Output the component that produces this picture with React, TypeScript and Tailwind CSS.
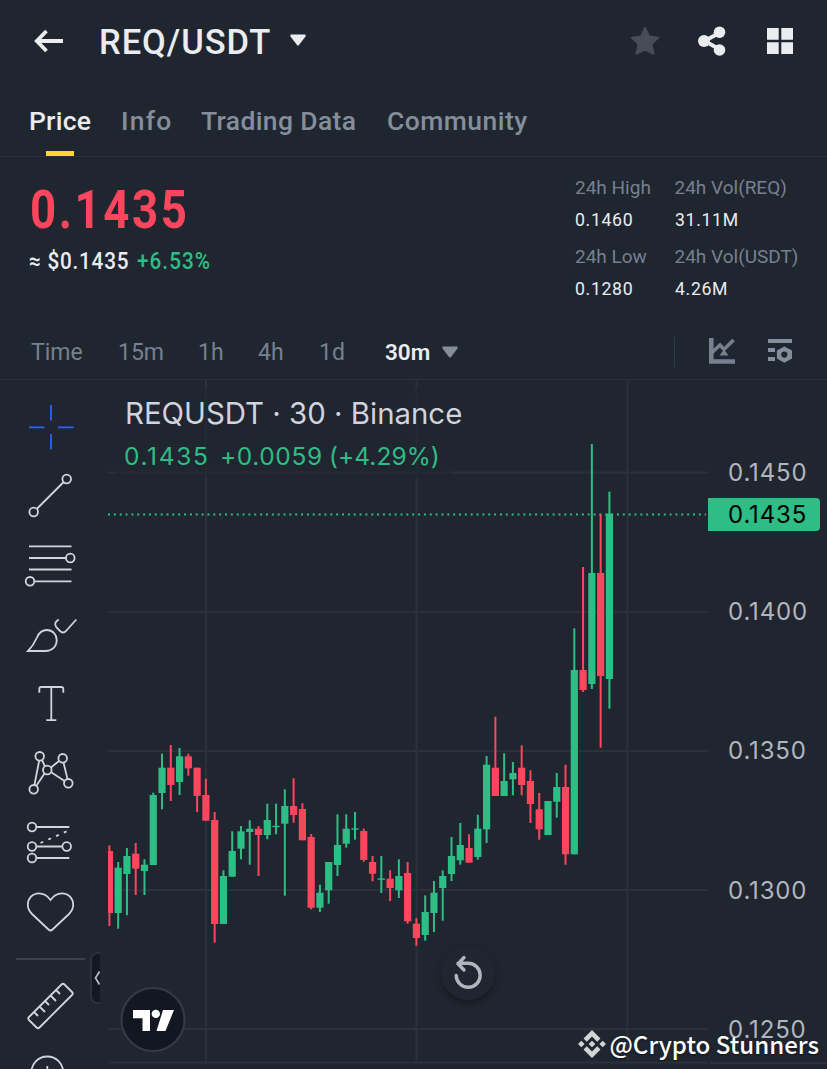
import type { ReactNode } from "react";

const UP = "#2ebd85";
const DOWN = "#fb465d";

// [direction, high, body top, body bottom, low], oldest first, in chart pixels
type Candle = ["u" | "d", number, number, number, number];

const CANDLES: Candle[] = [
  ["d", 845.3, 851, 913, 926],
  ["u", 862, 867.7, 913, 928.7],
  ["u", 848, 856, 874, 915.3],
  ["d", 843, 853.7, 868.7, 895],
  ["u", 859.3, 864.7, 871, 895],
  ["u", 792.7, 795, 865, 865],
  ["u", 753.7, 767.7, 793, 809.3],
  ["d", 745, 767.7, 785, 801],
  ["u", 748, 756.3, 782, 795],
  ["d", 753.7, 756.3, 768.3, 775.7],
  ["d", 767.7, 767.7, 796, 812],
  ["d", 778.7, 795, 820.7, 820.7],
  ["d", 812, 820, 924, 942.7],
  ["u", 870.3, 876, 924, 924],
  ["u", 831.3, 851, 876.7, 876.7],
  ["u", 826, 831.3, 848.7, 859.3],
  ["u", 820.3, 828.7, 832, 864.7],
  ["d", 826, 828.7, 835, 876],
  ["u", 803.7, 820, 835, 839.3],
  ["u", 803.7, 825.8, 827.2, 834.3],
  ["u", 789.3, 806, 823.7, 895.7],
  ["d", 778.3, 806, 815, 822.7],
  ["d", 803.3, 809, 840.3, 840.3],
  ["d", 834, 837, 907.7, 909.3],
  ["u", 884.7, 892.7, 907.7, 912],
  ["u", 862, 862, 890.3, 903.7],
  ["u", 814.3, 845, 865, 876],
  ["u", 814.3, 828.7, 843.7, 847.7],
  ["u", 812, 828.3, 829.7, 839.7],
  ["d", 828.7, 831, 860, 861.7],
  ["d", 856, 862, 873.7, 881.3],
  ["u", 856, 878.4, 879.8, 893],
  ["d", 870.3, 878.7, 888, 901],
  ["u", 859.3, 876, 890.3, 898],
  ["d", 862, 873, 921.3, 923.7],
  ["d", 918, 923.7, 938, 945.7],
  ["u", 895.3, 912, 935, 940.7],
  ["u", 881, 892.7, 913, 932],
  ["u", 870.3, 876, 888, 920.7],
  ["u", 837, 856, 874, 881],
  ["u", 823, 845, 860.3, 864.7],
  ["d", 834.3, 848, 862.7, 862.7],
  ["u", 814.7, 828.7, 857, 859.7],
  ["u", 756, 764.7, 829.3, 843],
  ["d", 716.7, 767.7, 796, 796],
  ["u", 753.3, 781, 796, 796],
  ["u", 762, 773, 779.3, 795.3],
  ["d", 745.3, 767.7, 785, 795.3],
  ["d", 770.3, 781, 804, 823],
  ["d", 793, 809.3, 829.3, 839.7],
  ["u", 801, 801, 835, 835],
  ["u", 773, 787, 801.7, 817.7],
  ["d", 764.7, 787, 854.3, 864.7],
  ["u", 628.3, 670, 854.3, 854.3],
  ["d", 567, 670, 690, 692],
  ["u", 444, 573, 684, 689],
  ["d", 514.3, 573, 676, 747.7],
  ["u", 491.7, 513.7, 679, 708.7],
];

const STEP = 8.772;
const GRID_Y = [472.5, 611.7, 751, 890, 1029];
const GRID_X = [206, 416.5, 627.5];
const PRICES = ["0.1450", "0.1400", "0.1350", "0.1300", "0.1250"];

function Caret({ className }: { className: string }) {
  return (
    <svg width="16" height="12" viewBox="0 0 16 12" className={className} fill="currentColor">
      <path d="M.5.5h15v2L9 11Q8 12 7 11L.5 2.5z" />
    </svg>
  );
}

function Header() {
  return (
    <header className="flex h-[82px] items-center pl-[34px] pr-[34px] text-[#eaecef]">
      <svg width="30" height="24" viewBox="0 0 30 24" fill="none" stroke="currentColor" strokeWidth="3.8">
        <path d="M12.500 2 2.800 12l9.700 10M3 12h26" />
      </svg>
      <h1 className="mt-[2px] ml-[35px] w-[172px] whitespace-nowrap text-[34.500px] leading-none font-medium tracking-[0.950px]">
        REQ/USDT
      </h1>
      <Caret className="ml-[19px] -mt-[2px]" />
      <div className="ml-auto flex items-center">
        <svg width="30" height="30" viewBox="0 0 30 30" fill="#474d57" stroke="#474d57" strokeWidth="2" strokeLinejoin="round">
          <path d="m15 2 3.900 8.500 9.100 1.200-6.600 6.400 2.100 9.400L15 23.600l-8.500 3.900 2.100-9.400L2 11.700l9.100-1.200z" />
        </svg>
        <svg width="30" height="30" viewBox="0 0 30 30" fill="currentColor" className="ml-[37px]">
          <path d="M23 6.500 7.500 15 23 23.500" fill="none" stroke="currentColor" strokeWidth="3.800" />
          <circle cx="7" cy="15" r="6" />
          <circle cx="22.500" cy="6.200" r="5.800" />
          <circle cx="22.500" cy="24" r="5.800" />
        </svg>
        <svg width="26" height="26" viewBox="0 0 26 26" fill="currentColor" className="ml-[40px]">
          <path d="M0 0h11.700v11.700H0zM14.300 0H26v11.700H14.300zM0 14.300h11.700V26H0zM14.300 14.300H26V26H14.300z" />
        </svg>
      </div>
    </header>
  );
}

function Tabs() {
  return (
    <nav className="flex h-[75px] border-b border-[#2b3139] pl-[29px] text-[26.500px] font-medium text-[#848e9c]">
      <div className="flex w-[92px] flex-col">
        <span className="pt-[19px] tracking-[0.200px] text-[#eaecef]">Price</span>
        <span className="mt-auto ml-[17px] h-[5px] w-[28px] bg-[#fcd535]" />
      </div>
      <span className="w-[80px] pt-[19px] tracking-[1.200px]">Info</span>
      <span className="w-[186px] pt-[19px] tracking-[0.350px] whitespace-nowrap">Trading Data</span>
      <span className="pt-[19px] tracking-[0.450px]">Community</span>
    </nav>
  );
}

function Stat({ label, value }: { label: string; value: string }) {
  return (
    <div className="h-[69px] whitespace-nowrap">
      <div className="text-[19px] leading-[31px] text-[#76808f]">{label}</div>
      <div className="origin-left scale-x-[0.930] pt-[2px] text-[19px] leading-[30px] tracking-[0.700px] text-[#eaecef]">{value}</div>
    </div>
  );
}

function Summary() {
  return (
    <section className="flex h-[168px] pl-[30px]">
      <div className="w-[545px] whitespace-nowrap">
        <div className="mt-[26px] origin-left scale-x-[0.860] text-[53px] leading-[54px] font-bold tracking-[3px] text-[#fb465d]">
          0.1435
        </div>
        <div className="mt-[10px] -ml-px origin-left scale-x-[0.900] text-[23px] leading-[30px] font-medium tracking-[0.850px] text-[#eaecef]">
          ≈ $0.1435 <span className="ml-[2px] tracking-[1.200px] text-[#2ebd85]">+6.53%</span>
        </div>
      </div>
      <div className="grid grid-cols-[99.500px_auto] content-start pt-[15px]">
        <Stat label="24h High" value="0.1460" />
        <Stat label="24h Vol(REQ)" value="31.11M" />
        <Stat label="24h Low" value="0.1280" />
        <Stat label="24h Vol(USDT)" value="4.26M" />
      </div>
    </section>
  );
}

function Intervals() {
  return (
    <div className="flex h-[55px] items-center border-b border-[#2b3139] pl-[31px] text-[23px] text-[#76808f]">
      <span className="mt-[3px] w-[87px]">Time</span>
      <span className="mt-[3px] w-[80px]">15m</span>
      <span className="mt-[3px] w-[60px]">1h</span>
      <span className="mt-[3px] w-[61px]">4h</span>
      <span className="mt-[3px] w-[66px]">1d</span>
      <span className="mt-[1px] w-[57px] text-[22.500px] font-semibold text-[#eaecef]">30m</span>
      <Caret className="text-[#848e9c]" />
      <span className="ml-[216px] h-[30px] w-px bg-[#333b47]" />
      <svg width="26" height="26" viewBox="0 0 26 26" className="ml-[34px] -mt-[2px]" fill="none" stroke="currentColor" strokeWidth="4.600">
        <path d="M2.300 0v23.500H26" />
        <path d="m3 14.500 8-7.500 4 4.500L24.500 2" strokeWidth="3.600" />
        <path d="m15 11.500 4.500 6h-9z" fill="currentColor" stroke="none" />
      </svg>
      <svg width="24" height="26" viewBox="0 0 24 26" className="ml-[33px]" fill="#848e9c">
        <path d="M0 0h24v4H0zM0 9h7v4H0zM0 18h7v4H0z" />
        <path fillRule="evenodd" d="m16.300 7.500 7.700 4v8l-7.700 4.200-7.400-4.200v-8zm0 5a3 3 0 1 0 0 6.200 3 3 0 0 0 0-6.200z" />
      </svg>
    </div>
  );
}

function Tool({ children, color = "#d1d4dc" }: { children: ReactNode; color?: string }) {
  return (
    <div className="flex h-[69.300px] shrink-0 items-center">
      <svg width="56" height="56" viewBox="0 0 56 56" fill="none" stroke={color} strokeWidth="1.800" className="overflow-visible">
        {children}
      </svg>
    </div>
  );
}

function Toolbar() {
  return (
    <aside className="flex w-[108px] shrink-0 flex-col overflow-hidden pt-[12px] pl-[23px]">
      {/* crosshair */}
      <Tool color="#2962ff">
        <path d="M28 6v15.500M28 35v15.500M6 28.300h15.500M35 28.300h15.500" />
      </Tool>
      {/* trend line */}
      <Tool>
        <circle cx="10.700" cy="44" r="4.300" />
        <circle cx="43.700" cy="11" r="4.300" />
        <path d="m13.700 41 27-27" />
      </Tool>
      {/* fib levels */}
      <Tool>
        <path d="M6 9.300h42.500M6 21h37M6 32.500h42.500M11.500 44.300h37" />
        <circle cx="47.300" cy="21" r="4.300" />
        <circle cx="7" cy="44.300" r="4.300" />
      </Tool>
      {/* brush */}
      <Tool>
        <path d="M5 44C9 40 12 35 14 30.500C16 25.500 20 23 24 23C29.500 23 33.700 27.500 33.700 33C33.700 40 28.500 44 22.700 44Z" />
        <path d="M35.700 12.500C32 15 31 17.500 33.500 20.500L37 24C39 26 41 26 43 24L53.300 12.500" />
      </Tool>
      {/* text */}
      <Tool>
        <path d="M16.300 16.700V13q0-2 2-2h20q2 0 2 2v3.700M28.300 11v33M23.300 44.200h10" />
      </Tool>
      {/* pattern */}
      <Tool>
        <path d="m16.200 15.600-4.800 24.400M19 15l3 6.500M28 22.500l8-6.500M21.500 28.500l-8 12M28.200 27.300l13.300 8.700M40.500 17.500l4 16.600" />
        <circle cx="16.700" cy="11.300" r="4.300" />
        <circle cx="39.700" cy="13.300" r="4.300" />
        <circle cx="24.300" cy="25" r="4.300" />
        <circle cx="10.700" cy="44.300" r="4.300" />
        <circle cx="45.300" cy="38.300" r="4.300" />
      </Tool>
      {/* projection */}
      <Tool>
        <circle cx="9" cy="13" r="4.300" />
        <circle cx="9" cy="32.500" r="4.300" />
        <circle cx="43.700" cy="32.500" r="4.300" />
        <circle cx="9" cy="44" r="4.300" />
        <path d="M13.300 13h33M13.300 32.500h26M13.300 44h33" />
        <path d="m17.500 29 27-12" strokeDasharray="3 5.500" />
      </Tool>
      {/* heart */}
      <Tool>
        <path d="M27.500 16C24 11 20 9.300 16 9.300C9.500 9.300 4.800 14.500 4.800 20.800C4.800 24.500 6.500 27.500 9 30L25.500 45.500Q27.500 47.500 29.500 45.500L46 30C48.500 27.500 50.200 24.500 50.200 20.800C50.200 14.500 45.500 9.300 39 9.300C35 9.300 31 11 27.500 16Z" />
      </Tool>
      <div className="-ml-[7px] mt-[12px] h-[2px] w-[69px] shrink-0 bg-[#3d424f]" />
      {/* ruler */}
      <div className="mt-[18px] h-[56px] shrink-0">
        <svg width="56" height="56" viewBox="0 0 56 56" fill="none" stroke="#d1d4dc" strokeWidth="1.800">
          <path d="M38.500 6.500Q40 5 41.500 6.500L49 14Q50.500 15.500 49 17L16.500 49.500Q15 51 13.500 49.500L6 42Q4.500 40.500 6 39zM11 34l4 4M16.500 28.500l5.500 5.500M22 23l4 4M27.500 17.500l5.500 5.500M33 12l4 4" />
        </svg>
      </div>
      {/* zoom */}
      <svg width="56" height="40" viewBox="0 0 56 40" fill="none" stroke="#d1d4dc" strokeWidth="1.800" className="mt-[20px] shrink-0">
        <circle cx="24.300" cy="18.500" r="16" />
        <path d="M24.300 12v13M18 18.500h13" />
      </svg>
    </aside>
  );
}

function Chart() {
  return (
    <div className="relative w-[600px] shrink-0">
      <svg width="600" height="689" viewBox="108 380 600 689" className="block">
        {GRID_Y.map((y) => (
          <line key={y} x1="108" x2="708" y1={y} y2={y} stroke="#2b303b" strokeWidth="2" />
        ))}
        {GRID_X.map((x) => (
          <line key={x} x1={x} x2={x} y1="380" y2="1062" stroke="#2b303b" strokeWidth="2" />
        ))}
        <line x1="108" x2="708" y1="1062.500" y2="1062.500" stroke="#2b303b" strokeWidth="2" />
        {/* last price */}
        <line x1="108" x2="706" y1="514.500" y2="514.500" stroke={UP} strokeWidth="2" strokeDasharray="2 3.850" />
        {CANDLES.map(([dir, high, top, bottom, low], i) => {
          const x = 609.4 - (CANDLES.length - 1 - i) * STEP;
          return (
            <g key={i} fill={dir === "u" ? UP : DOWN}>
              <rect x={x - 1} y={high} width="2" height={low - high} />
              <rect x={x - 3.6} y={top} width="7.2" height={bottom - top} />
            </g>
          );
        })}
      </svg>

      {/* legend */}
      <div className="absolute left-[7px] top-[8px] h-[90px] w-[336px] bg-[#202630]/60 pl-[10px] font-['Inter'] whitespace-nowrap">
        <div className="pt-[8px] text-[29.400px] leading-[36px] text-[#d1d4dc]">REQUSDT · 30 · Binance</div>
        <div className="-ml-px mt-[9px] flex text-[24.500px] leading-[30px] text-[#2ebd85]">
          <span className="w-[96px] tracking-[1.650px]">0.1435</span>
          <span className="w-[109px] tracking-[0.600px]">+0.0059</span>
          <span className="tracking-[0.050px]">(+4.29%)</span>
        </div>
      </div>

      {/* TradingView badge */}
      <svg width="66" height="66" viewBox="0 0 66 66" className="absolute left-[12px] top-[606px]">
        <circle cx="33" cy="33.500" r="31.500" fill="#131722" stroke="#363a45" strokeWidth="2" />
        <path d="M13 24h17v21h-7.500V32.200H13zM43 24h11L45.500 45H36.500z" fill="#fff" />
        <circle cx="35.800" cy="27.900" r="4.200" fill="#fff" />
      </svg>

      {/* reset */}
      <div className="absolute left-[333px] top-[566px] flex size-[54px] items-center justify-center rounded-full bg-[#202630] shadow-[0_3px_8px_rgba(0,0,0,0.35)]">
        <svg width="30" height="36" viewBox="0 0 30 36" fill="none" stroke="#b2b5be" strokeWidth="3.400" strokeLinecap="round" strokeLinejoin="round">
          <path d="M3.200 20.500a12 12 0 1 0 12-12.200H5M11 2.500 5 8.800l6 6.200" />
        </svg>
      </div>

      {/* toolbar collapse handle */}
      <div className="absolute -left-[18px] top-[572px] flex h-[52px] w-[10px] items-center justify-end rounded-l-[8px] border-2 border-r-0 border-[#2b303b] bg-[#131722]">
        <svg width="6" height="14" viewBox="0 0 6 14" fill="none" stroke="#b2b5be" strokeWidth="1.800">
          <path d="M5.500.500 1.500 7l4 6.500" />
        </svg>
      </div>
    </div>
  );
}

function PriceAxis() {
  return (
    <div className="relative flex-1 pt-[78px] font-['Inter'] text-[24px] leading-[30px] tracking-[0.850px] text-[#b2b5be]">
      {PRICES.map((price) => (
        <div key={price} className="h-[139.200px] pl-[20px]">
          {price}
        </div>
      ))}
      <div className="absolute left-0 top-[118px] h-[33px] w-[112px] rounded-r-[4px] bg-[#2ebd85] pl-[20px] leading-[33px] text-black">
        0.1435
      </div>
      <div className="absolute left-[2px] right-0 top-[682px] h-[2px] bg-[#2b303b]" />
    </div>
  );
}

function Watermark() {
  return (
    <div className="absolute right-[8px] bottom-[9px] flex items-center gap-[4px] font-['Noto_Sans_CJK_SC'] text-[24.050px] leading-[32px] font-medium whitespace-nowrap text-white">
      <svg width="28" height="28" viewBox="0 0 28 28" fill="#d4d4d4">
        <path d="m14 0 8.500 8.500-3.300 3.300L14 6.600l-5.200 5.200-3.300-3.300zM14 28l-8.500-8.500 3.300-3.300 5.200 5.200 5.200-5.200 3.300 3.300zM14 10.700l3.300 3.300-3.300 3.300-3.300-3.300zM3.300 10.700 6.600 14l-3.300 3.300L0 14zM24.700 10.700 28 14l-3.300 3.300-3.300-3.300z" />
      </svg>
      <span className="[text-shadow:0_1px_2px_rgba(0,0,0,0.5)]">@Crypto Stunners</span>
    </div>
  );
}

export default function App() {
  return (
    <div className="relative flex h-[1069px] w-[827px] flex-col overflow-hidden bg-[#202630] font-['Roboto',sans-serif]">
      <Header />
      <Tabs />
      <Summary />
      <Intervals />
      <main className="flex h-[689px]">
        <Toolbar />
        <Chart />
        <PriceAxis />
      </main>
      <Watermark />
    </div>
  );
}
